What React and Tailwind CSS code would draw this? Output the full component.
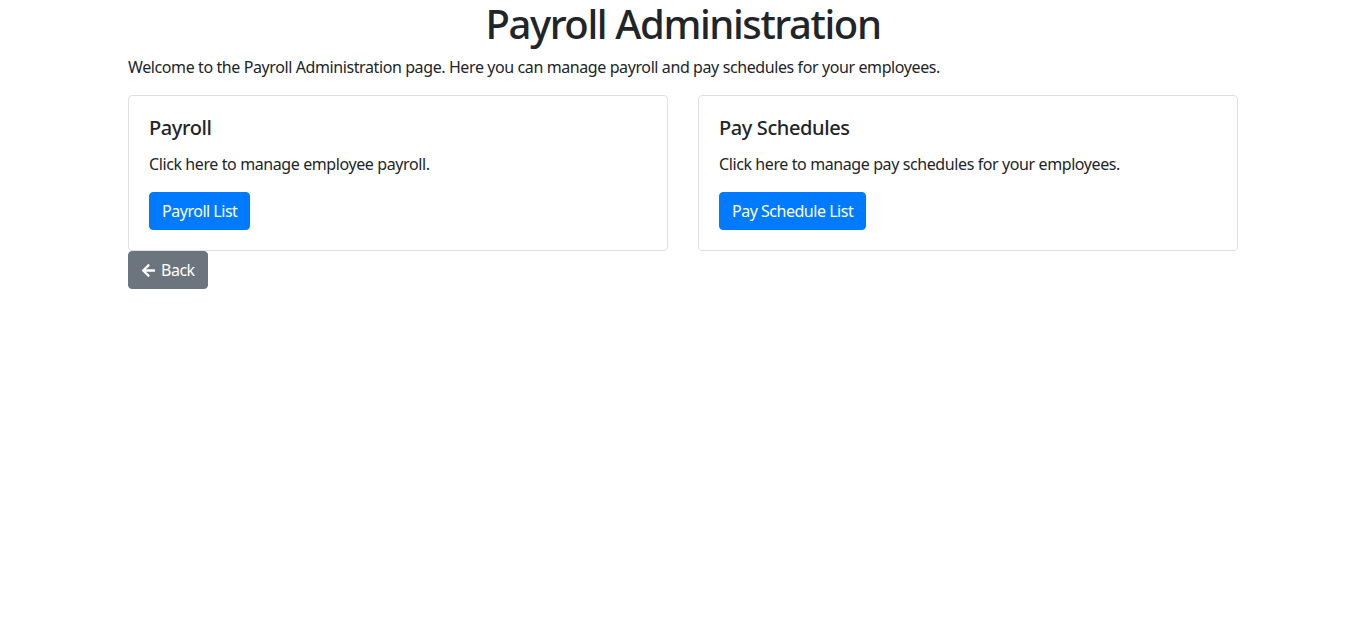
import { FaArrowLeft } from 'react-icons/fa'

const font = { fontFamily: '"Noto Sans", "Segoe UI", Roboto, sans-serif' }

const AdminCard = ({ title, text, button }) => {
    return (
        <div className="border border-[#dfdfdf] rounded-[4px] bg-white">
            <div className="p-5">
                <h5 className="text-[20px] leading-6 font-medium mb-3">{title}</h5>
                <p className="text-[16px] leading-6 mb-4">{text}</p>
                <button className="bg-[#007bff] text-white text-[16px] leading-6 px-3 py-[6px] rounded-[4px] border border-[#007bff] tracking-[-0.03em]">
                    {button}
                </button>
            </div>
        </div>
    )
}

const App = () => {
    return (
        <div className="bg-white min-h-[621px] text-[#212529] tracking-[-0.025em]" style={font}>
            <div className="w-[1110px] ml-[128px]">
                <h1 className="text-[40px] leading-[47px] font-medium text-center mb-2 tracking-[-0.035em]">Payroll Administration</h1>
                <p className="text-[16px] leading-6 mb-4">
                    Welcome to the Payroll Administration page. Here you can manage payroll and pay schedules for your employees.
                </p>
                <div className="grid grid-cols-2 gap-[30px]">
                    <AdminCard title="Payroll" text="Click here to manage employee payroll." button="Payroll List" />
                    <AdminCard title="Pay Schedules" text="Click here to manage pay schedules for your employees." button="Pay Schedule List" />
                </div>
                <button className="flex items-center gap-[5px] bg-[#6c757d] text-white text-[16px] leading-6 px-3 py-[6px] rounded-[4px] border border-[#6c757d] tracking-[-0.03em]">
                    <FaArrowLeft className="w-[15px] h-[15px]" />
                    Back
                </button>
            </div>
        </div>
    )
}

export default App
